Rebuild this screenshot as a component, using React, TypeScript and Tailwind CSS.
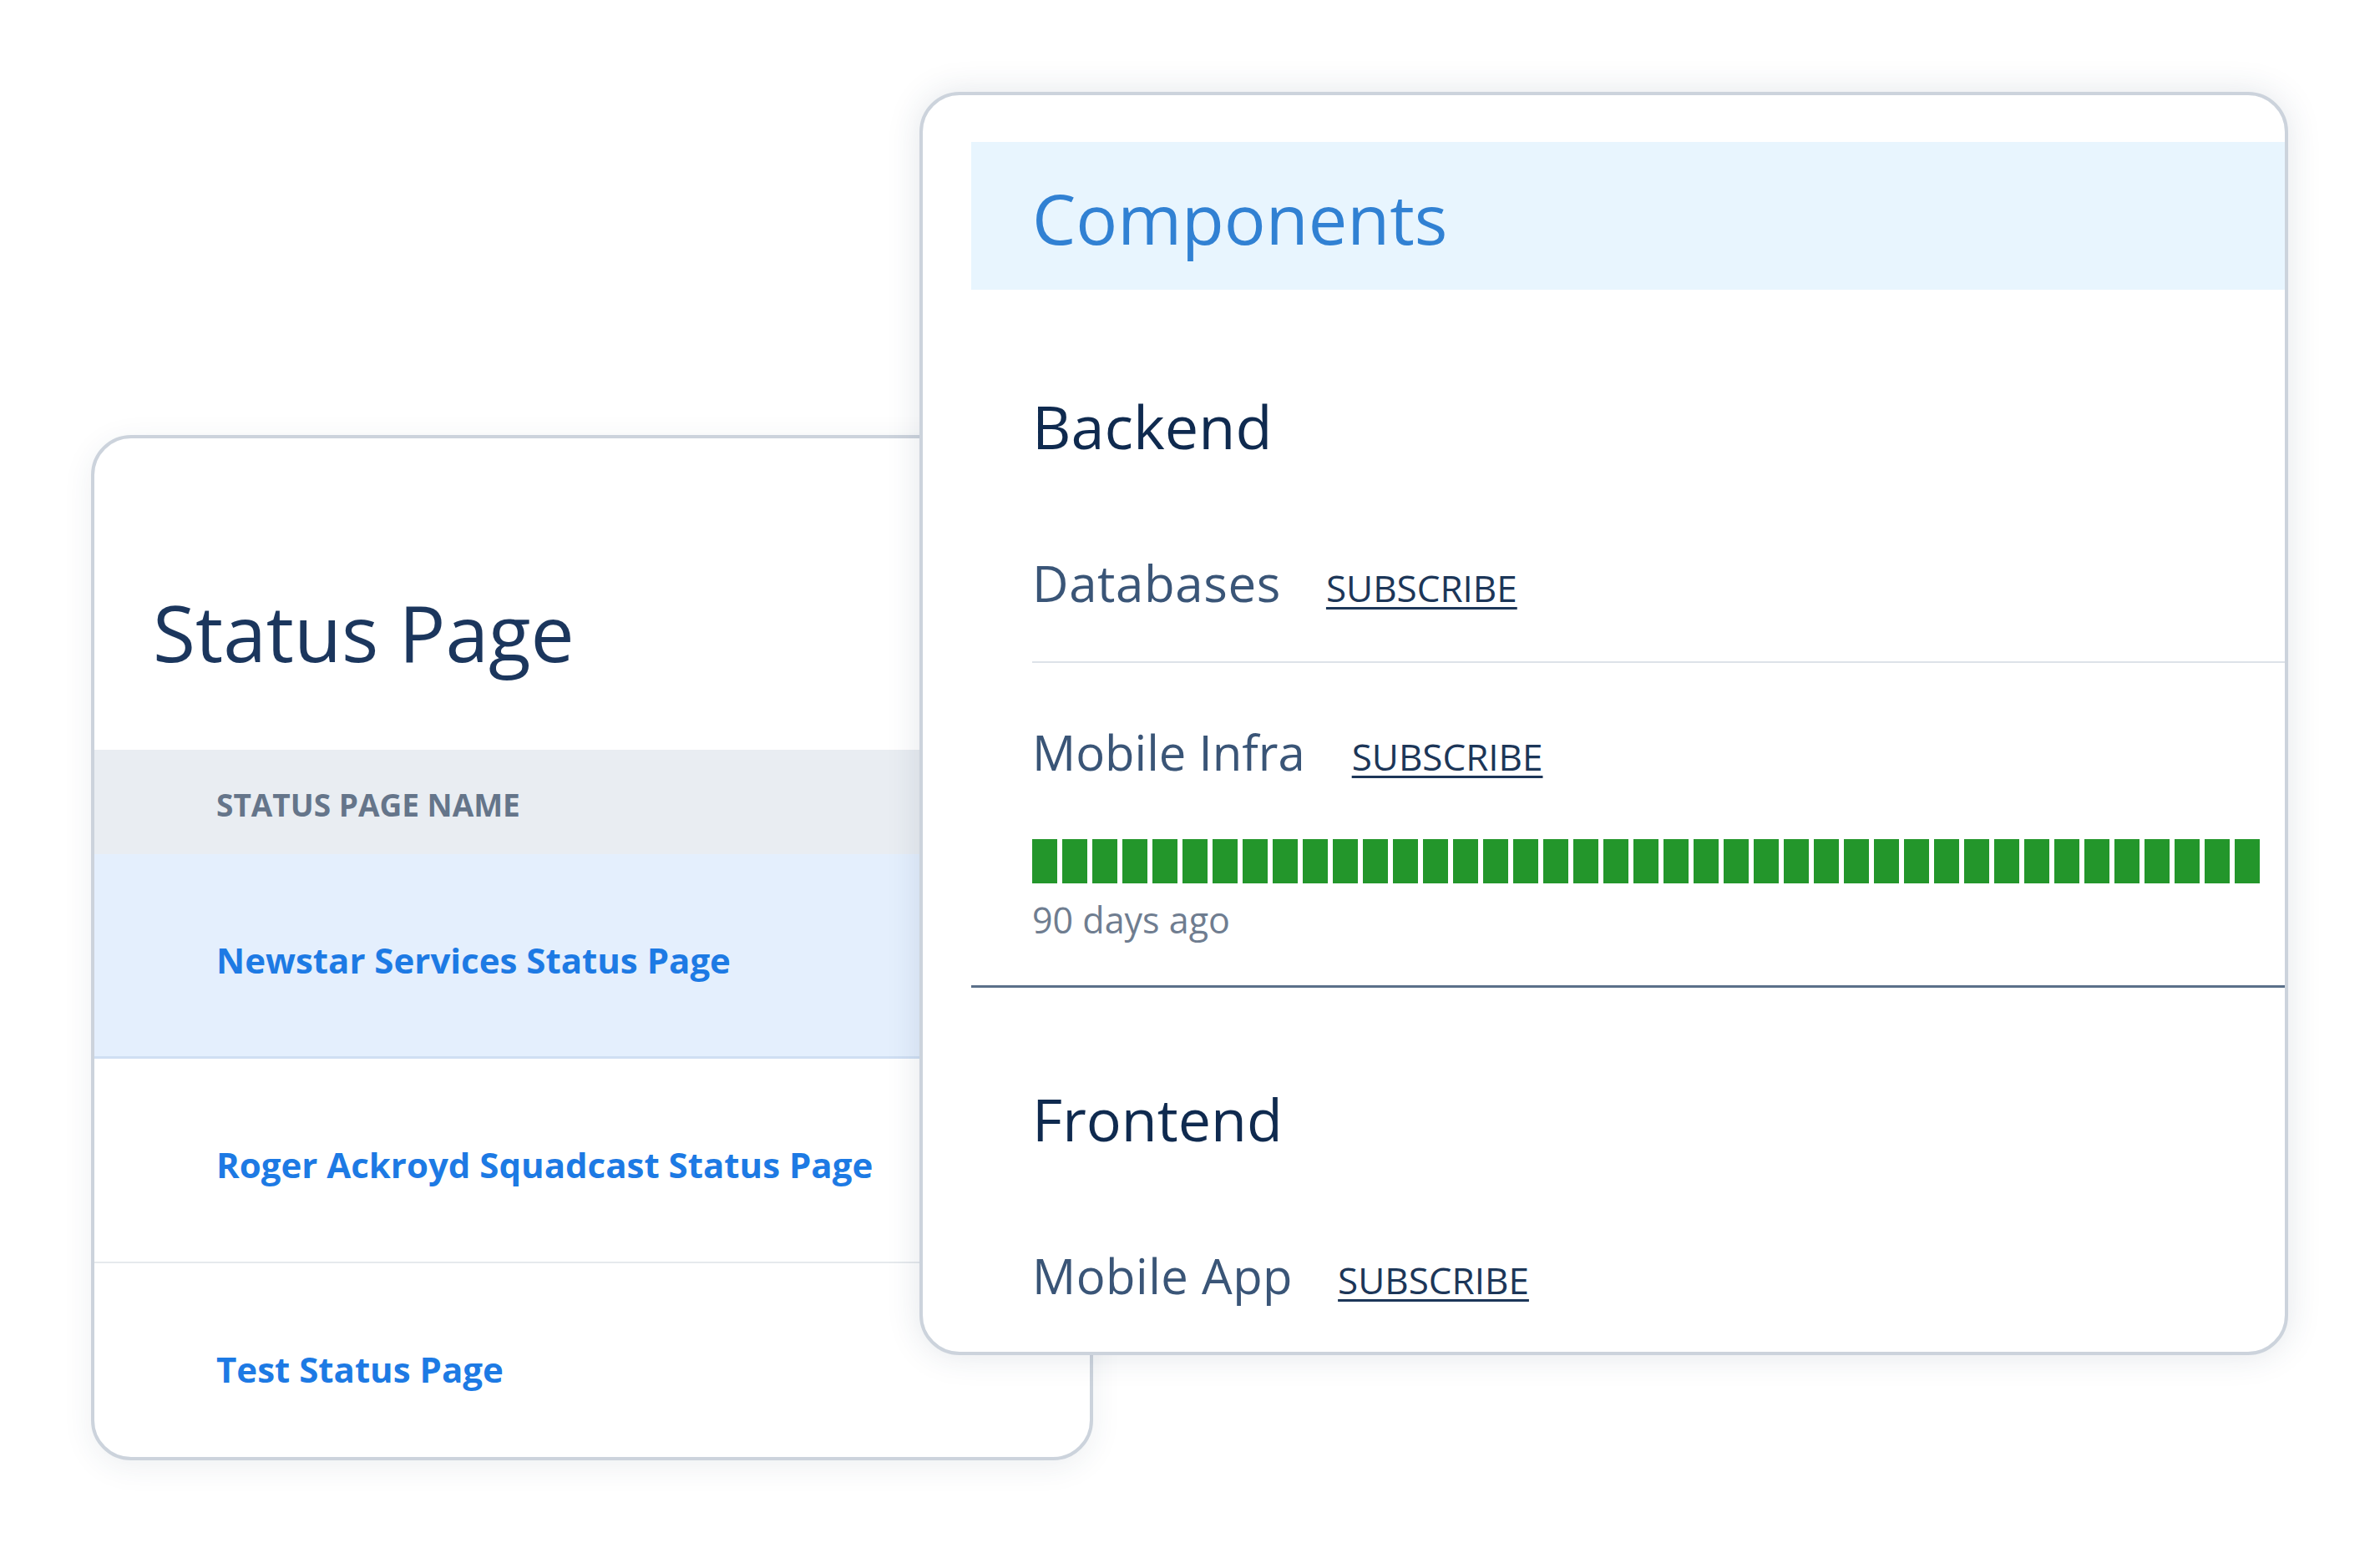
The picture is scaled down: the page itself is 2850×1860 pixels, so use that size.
import React from "react";

const rows = [
  { name: "Newstar Services Status Page", active: true },
  { name: "Roger Ackroyd Squadcast Status Page", active: false },
  { name: "Test Status Page", active: false },
];

const bars = Array.from({ length: 41 }, (_, i) => i);

function Subscribe() {
  return (
    <span className="text-[44px] leading-[60px] text-[#1c3658] underline decoration-[3px] underline-offset-[6px]">
      SUBSCRIBE
    </span>
  );
}

function ComponentRow({
  name,
  gap,
  nameClass = "",
  className = "",
}: {
  name: string;
  gap: string;
  nameClass?: string;
  className?: string;
}) {
  return (
    <div className={`flex items-baseline ${gap} ${className}`}>
      <span className={`text-[58px] leading-[80px] text-[#3a5577] ${nameClass}`}>{name}</span>
      <Subscribe />
    </div>
  );
}

export default function App() {
  return (
    <div className="relative h-[1860px] w-[2850px] overflow-hidden bg-white font-['Open_Sans',sans-serif]">
      {/* status page list */}
      <div className="absolute left-[109px] top-[521px] h-[1228px] w-[1200px] overflow-hidden rounded-[48px] border-[4px] border-[#ccd3dc] bg-white shadow-[0_8px_36px_rgba(40,60,90,0.08)]">
        <div className="h-[373px] pl-[70px] pt-[177px]">
          <h1 className="text-[93px] leading-[110px] text-[#1b365d]">Status Page</h1>
        </div>
        <div className="flex h-[125px] items-center bg-[#e9edf2] pl-[146px] pt-[6px]">
          <span className="text-[37px] font-bold uppercase text-[#65758a]">Status Page Name</span>
        </div>
        {rows.map((r) => (
          <div
            key={r.name}
            className={`flex h-[245px] items-center pl-[146px] pt-[10px] ${
              r.active ? "border-b-[3px] border-[#cfdff3] bg-[#e4effd]" : "border-b-[2px] border-[#e6e9ed]"
            }`}
          >
            <span className="text-[42px] font-bold text-[#1d7ae4]">{r.name}</span>
          </div>
        ))}
      </div>

      {/* components card */}
      <div className="absolute left-[1101px] top-[110px] h-[1513px] w-[1639px] overflow-hidden rounded-[48px] border-[4px] border-[#ccd3dc] bg-white pl-[58px] pt-[56px] shadow-[0_0_40px_rgba(40,60,90,0.13)]">
        <div className="flex h-[177px] items-center bg-[#e8f5fe] pl-[73px] pt-[4px]">
          <h2 className="text-[83px] leading-[110px] text-[#3181d3]">Components</h2>
        </div>

        <div className="border-b-[3px] border-[#5b7089] pb-[50px] pl-[73px]">
          <h3 className="mt-[118px] text-[72px] leading-[90px] text-[#0f2a4f]">Backend</h3>
          <div className="mt-[103px] border-b-[2px] border-[#dde2e8] pb-[54px]">
            <ComponentRow name="Databases" gap="gap-[54px]" nameClass="text-[60px] tracking-[0.6px]" />
          </div>
          <ComponentRow name="Mobile Infra" gap="gap-[56px]" className="mt-[67px]" />
          <div className="mt-[64px] flex h-[53px] w-[1470px] gap-[6px]">
            {bars.map((b) => (
              <div key={b} className="flex-1 bg-[#23962b]" />
            ))}
          </div>
          <p className="mt-[16px] text-[43px] leading-[56px] text-[#6f7d90]">90 days ago</p>
        </div>

        <div className="pl-[73px]">
          <h3 className="mt-[112px] text-[70px] leading-[90px] text-[#0f2a4f]">Frontend</h3>
          <ComponentRow
            name="Mobile App"
            gap="gap-[54px]"
            nameClass="tracking-[0.5px]"
            className="mt-[103px]"
          />
        </div>
      </div>
    </div>
  );
}
